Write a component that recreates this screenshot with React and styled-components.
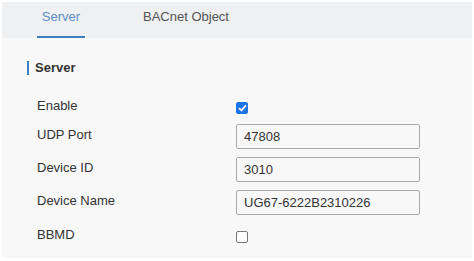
import React from 'react';
import styled, { createGlobalStyle } from 'styled-components';

const Global = createGlobalStyle`
  body {
    margin: 0;
    background: #ffffff;
    font-family: "Liberation Sans", Arial, sans-serif;
  }
`;

const Page = styled.div`
  width: 470px;
  height: 256px;
  margin: 2px 0 0 2px;
  background: #f8f8f8;
`;

const TabBar = styled.div`
  display: flex;
  height: 36px;
  padding-left: 35px;
  background: #eff0f1;
  gap: 57px;
`;

const Tab = styled.div`
  display: flex;
  align-items: center;
  justify-content: center;
  width: ${(p) => p.width}px;
  font-size: 13px;
  color: ${(p) => (p.active ? '#5a8fc6' : '#555')};
  border-bottom: 2px solid ${(p) => (p.active ? '#3c7fc1' : 'transparent')};
  padding-bottom: 6px;
`;

const Section = styled.h3`
  margin: 23px 0 0 25px;
  padding-left: 6px;
  border-left: 2px solid #3c7fc1;
  font-size: 13px;
  line-height: 14px;
  font-weight: bold;
  color: #333;
`;

const Form = styled.div`
  display: grid;
  grid-template-columns: 199px 184px;
  padding-left: 35px;
  margin-top: 21px;
`;

const Label = styled.div`
  display: flex;
  align-items: center;
  height: ${(p) => p.h}px;
  padding-bottom: ${(p) => p.lift}px;
  box-sizing: border-box;
  font-size: 13px;
  color: #333;
`;

const Cell = styled.div`
  display: flex;
  align-items: center;
  height: ${(p) => p.h}px;
`;

const Check = styled.span`
  display: inline-flex;
  align-items: center;
  justify-content: center;
  width: 12px;
  height: 12px;
  box-sizing: border-box;
  border-radius: 2px;
  border: 1px solid ${(p) => (p.checked ? '#1a73e8' : '#767676')};
  background: ${(p) => (p.checked ? '#1a73e8' : '#fff')};
`;

const Input = styled.div`
  display: flex;
  align-items: center;
  width: 184px;
  height: 25px;
  box-sizing: border-box;
  padding-left: 7px;
  border: 1px solid #a9a9a9;
  border-radius: 2px;
  background: #f8f8f8;
  font-size: 13px;
  color: #333;
`;

const rows = [
  { label: 'Enable', type: 'check', checked: true, h: 24 },
  { label: 'UDP Port', type: 'input', value: '47808', h: 33 },
  { label: 'Device ID', type: 'input', value: '3010', h: 33 },
  { label: 'Device Name', type: 'input', value: 'UG67-6222B2310226', h: 33 },
  { label: 'BBMD', type: 'check', checked: false, h: 36 },
];

const App = () => (
  <>
    <Global />
    <Page>
      <TabBar>
        <Tab active width={48}>Server</Tab>
        <Tab width={88}>BACnet Object</Tab>
      </TabBar>
      <Section>Server</Section>
      <Form>
        {rows.map((r) => (
          <React.Fragment key={r.label}>
            <Label h={r.h} lift={r.type === 'check' ? 6 : 4}>{r.label}</Label>
            <Cell h={r.h}>
              {r.type === 'check' ? (
                <Check checked={r.checked}>
                  {r.checked && (
                    <svg width="9" height="8" viewBox="0 0 9 8">
                      <path d="M1 4.2 L3.4 6.4 L8 1.4" fill="none" stroke="#fff" strokeWidth="1.8" />
                    </svg>
                  )}
                </Check>
              ) : (
                <Input>{r.value}</Input>
              )}
            </Cell>
          </React.Fragment>
        ))}
      </Form>
    </Page>
  </>
);

export default App;
